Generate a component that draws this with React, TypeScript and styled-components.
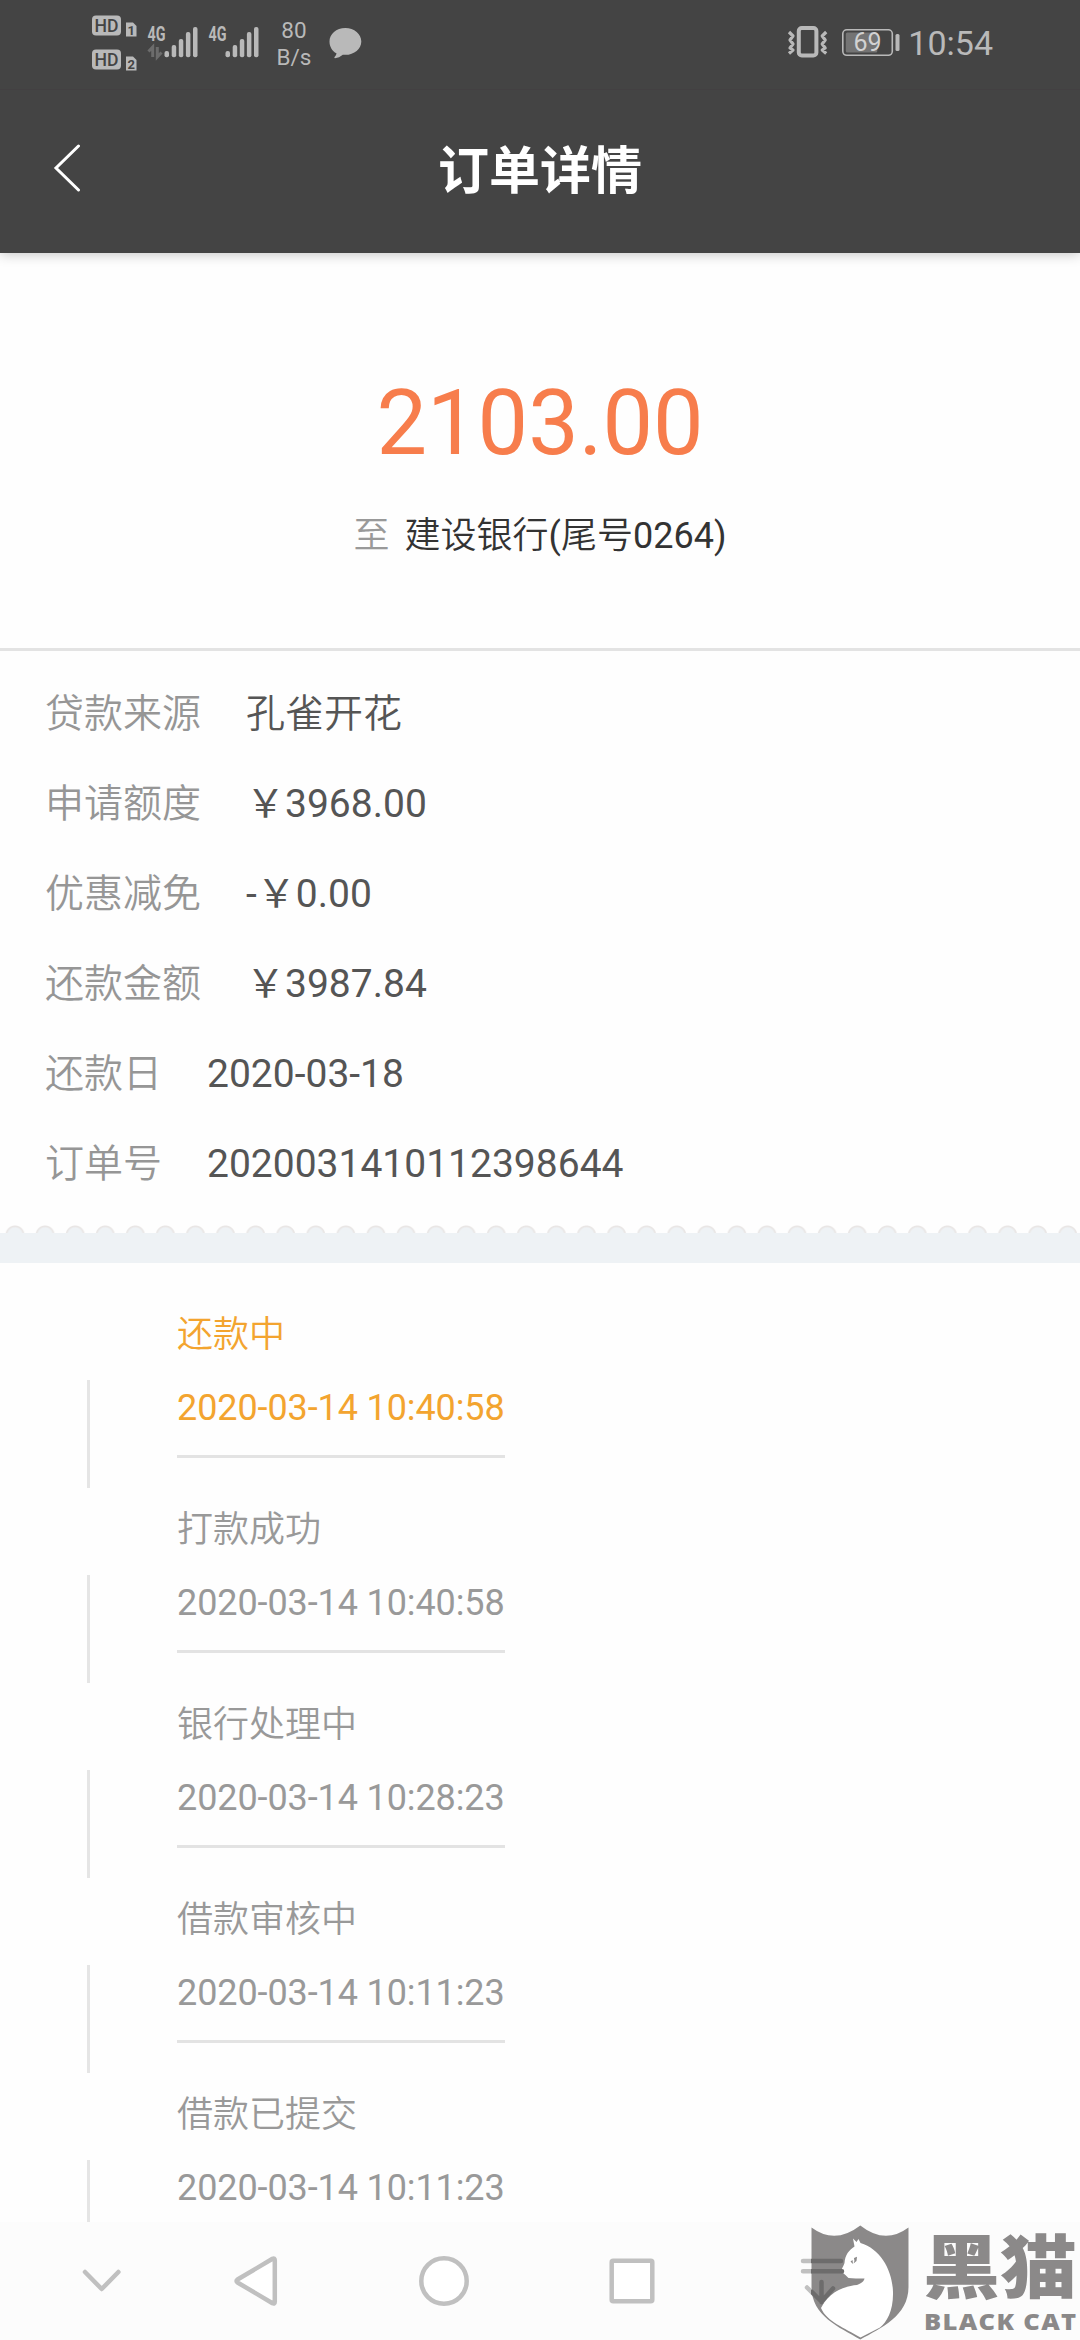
import React from 'react';
import styled, { createGlobalStyle } from 'styled-components';

const INK = '#b9b9b9';
const FONT = "Roboto, 'Noto Sans CJK SC', sans-serif";

const GlobalStyle = createGlobalStyle`
  *, *::before, *::after { box-sizing: border-box; }
  html, body { margin: 0; padding: 0; background: #fefefe; }
`;

const Screen = styled.div`
  position: relative;
  display: flex;
  flex-direction: column;
  width: 1080px;
  height: 2340px;
  overflow: hidden;
  background: #fefefe;
  font-family: ${FONT};
`;

/* ---------- status bar ---------- */

const StatusBar = styled.div`
  display: flex;
  flex: none;
  justify-content: space-between;
  height: 90px;
  padding: 0 87px 0 92px;
  background: #444;
  border-bottom: 1px solid #434042;
  color: ${INK};
  z-index: 2;
`;

const StatusGroup = styled.div`
  display: flex;
  align-items: flex-start;
`;

const StatusIcon = styled.svg<{ $left?: number }>`
  display: block;
  flex: none;
  margin-left: ${(p) => p.$left ?? 0}px;
  overflow: visible;
`;

const NetSpeed = styled.div`
  display: flex;
  flex-direction: column;
  align-items: center;
  width: 36px;
  margin: 17px 0 0 16px;
  font-size: 22.5px;
  line-height: 27px;
`;

const Clock = styled.div`
  margin: 23px 0 0 7px;
  font-size: 34px;
  line-height: 40px;
`;

const HdIcon = () => (
  <StatusIcon width="46" height="89" viewBox="92 0 46 89">
    {[0, 34].map((dy, i) => (
      <g key={dy} transform={`translate(0 ${dy})`}>
        <rect x="92" y="15.5" width="29" height="20" rx="4" fill={INK} />
        <text x="106.5" y="32" fontSize="18.5" fontWeight="500" textAnchor="middle" fill="#444"
          textLength="24" lengthAdjust="spacingAndGlyphs">HD</text>
        <path d="M126 22.5h7l3.5 3.5v10.500h-10.500z" fill={INK} />
        <text x="131.2" y="34.500" fontSize="13" fontWeight="700" textAnchor="middle" fill="#444">{i + 1}</text>
      </g>
    ))}
  </StatusIcon>
);

const BARS = [
  [164.500, 51],
  [171.700, 45],
  [178.800, 39],
  [185.900, 32],
  [193, 27],
];

const SignalIcon = ({ data }: { data?: boolean }) => (
  <StatusIcon width="61" height="89" viewBox="138 0 61 89">
    <text x="147.500" y="41" fontSize="20" fontWeight="700" fill={INK}
      textLength="18" lengthAdjust="spacingAndGlyphs">4G</text>
    {data && (
      <path d="M148.500 51.500l4.200-4.500v10M157.300 47v10l4.200-4.500" fill="none" stroke="#6c6c6c" strokeWidth="3" />
    )}
    {BARS.map(([x, y]) => (
      <rect key={x} x={x} y={y} width="4.500" height={57.3 - y} rx="2" fill={INK} />
    ))}
  </StatusIcon>
);

const BubbleIcon = () => (
  <StatusIcon $left={16} width="34" height="89" viewBox="328 0 34 89">
    <path fill={INK} d="M345.300 28c9 0 16 6 16 13.400s-7 13.400-16 13.400c-.9 0-1.700 0-2.500-.1-2.400 2-5 3.200-7.800 3.500-.7 0-.9-.7-.4-1.200 1.100-1.100 1.700-2.300 1.900-3.700-4.400-2.400-7-6.800-7-11.900C329.500 34 336.300 28 345.300 28z" />
  </StatusIcon>
);

const VibrateIcon = () => (
  <StatusIcon width="42" height="89" viewBox="786 0 42 89">
    <rect x="797.800" y="28" width="17.600" height="27.500" rx="3" fill="none" stroke={INK} strokeWidth="4" />
    <path d="M788 32l4 4-3 4 3 4-3 4 3 2-4 3.500M825.200 32l-4 4 3 4-3 4 3 4-3 2 4 3.500" fill="none"
      stroke={INK} strokeWidth="3.200" strokeLinejoin="round" />
  </StatusIcon>
);

const BatteryIcon = () => (
  <StatusIcon $left={13} width="59" height="89" viewBox="841 0 59 89">
    <rect x="841.800" y="29.800" width="49.500" height="25.500" rx="4" fill="none" stroke={INK} strokeWidth="1.600" />
    <rect x="844.800" y="32.500" width="31.500" height="20" rx="1.500" fill="#747474" />
    <rect x="894.500" y="34" width="4" height="17" rx="1.500" fill={INK} />
    <text x="866.500" y="51" fontSize="25" textAnchor="middle" fill="#d2d2d2">69</text>
  </StatusIcon>
);

/* ---------- title bar ---------- */

const TitleBar = styled.header`
  display: grid;
  grid-template-columns: 140px 1fr 140px;
  align-items: center;
  flex: none;
  height: 163px;
  background: #444;
  color: #fff;
  box-shadow: 0 1px 12px rgba(0, 0, 0, 0.24);
  z-index: 1;
`;

const BackIcon = styled.svg`
  display: block;
  margin: 0 0 7px 53px;
`;

const Title = styled.h1`
  margin: 0;
  font-size: 51px;
  font-weight: 700;
  line-height: 60px;
  text-align: center;
`;

/* ---------- amount ---------- */

const Summary = styled.section`
  display: flex;
  flex-direction: column;
  align-items: center;
  flex: none;
  height: 398px;
  padding-top: 118px;
  border-bottom: 3px solid #e3e3e3;
`;

const Amount = styled.div`
  color: #f77d4c;
  font-size: 90px;
  line-height: 106px;
`;

const Payee = styled.div`
  display: flex;
  gap: 15px;
  margin-top: 33px;
  color: #333;
  font-size: 36px;
  line-height: 52px;
`;

const Han = styled.span<{ $muted?: boolean }>`
  color: ${(p) => (p.$muted ? '#999' : 'inherit')};
  font-weight: 350;
`;

/* ---------- order details ---------- */

const Details = styled.dl`
  display: flex;
  flex-direction: column;
  flex: none;
  height: 574px;
  margin: 0;
  padding: 18px 45px 0;
`;

const DetailRow = styled.div`
  display: flex;
  align-items: center;
  gap: 45px;
  height: 90px;
  font-size: 39px;
  line-height: 58px;
`;

const Label = styled.dt`
  color: #969696;
  font-weight: 350;
`;

const Value = styled.dd<{ $han: boolean }>`
  margin: 0;
  color: #555;
  font-weight: ${(p) => (p.$han ? 350 : 400)};
`;

const Scallops = styled.div`
  flex: none;
  height: 8px;
  background: radial-gradient(circle at 15px 10px, #eef2f5 7px, #e9e6e5 8.500px, #e9e6e5 9px, transparent 10px) 0 0 / 30.080px 8px repeat-x;
`;

const Band = styled.div`
  flex: none;
  height: 30px;
  background: #eef2f5;
`;

/* ---------- timeline ---------- */

const Timeline = styled.ol`
  flex: 1;
  min-height: 0;
  margin: 0;
  padding: 36px 0 0;
  overflow: hidden;
  list-style: none;
`;

const Step = styled.li<{ $active?: boolean }>`
  display: flex;
  height: 195px;
  padding-left: 87px;
  color: ${(p) => (p.$active ? '#f3a42f' : '#999')};
`;

const Track = styled.div`
  flex: none;
  width: 3px;
  height: 108px;
  margin: 81px 87px 0 0;
  background: #e5e5e5;
`;

const StepBody = styled.div`
  height: 159px;
  border-bottom: 3px solid #e3e3e3;
  font-size: 36px;
`;

const StepName = styled.div`
  height: 72px;
  line-height: 73px;
  font-weight: 350;
`;

const StepTime = styled.div`
  line-height: 74px;
  letter-spacing: -0.1px;
`;

/* ---------- navigation bar ---------- */

const NavBar = styled.nav`
  display: flex;
  align-items: center;
  flex: none;
  height: 118px;
  padding: 0 0 1px 81px;
  background: #fcfcfc;
`;

const NavIcon = styled.svg<{ $gap: number }>`
  display: block;
  flex: none;
  margin-right: ${(p) => p.$gap}px;
  fill: none;
  stroke: #c0c0c0;
  stroke-width: 4.500px;
  stroke-linecap: round;
  stroke-linejoin: round;
`;

/* ---------- watermark ---------- */

const Watermark = styled.div`
  position: absolute;
  right: 2px;
  bottom: 0;
  display: flex;
  gap: 15px;
  height: 116px;
  color: #8b8989;
`;

const Shield = styled.svg`
  display: block;
  flex: none;
`;

const Brand = styled.div`
  display: flex;
  flex-direction: column;
  width: 154px;
  padding-top: 1px;
`;

const BrandName = styled.div`
  height: 82px;
  margin-left: -1px;
  font-family: 'Noto Sans CJK SC', sans-serif;
  font-size: 77px;
  font-weight: 900;
  line-height: 76px;
  white-space: nowrap;
  transform: scaleY(0.9);
`;

const BrandLatin = styled.div`
  font-family: 'Open Sans', sans-serif;
  font-size: 23px;
  font-weight: 800;
  line-height: 28px;
  letter-spacing: 1.200px;
  white-space: nowrap;
  transform: scaleX(1.11);
  transform-origin: left center;
`;

const details = [
  ['贷款来源', '孔雀开花'],
  ['申请额度', '￥3968.00'],
  ['优惠减免', '-￥0.00'],
  ['还款金额', '￥3987.84'],
  ['还款日', '2020-03-18'],
  ['订单号', '2020031410112398644'],
];

const steps = [
  ['还款中', '2020-03-14 10:40:58'],
  ['打款成功', '2020-03-14 10:40:58'],
  ['银行处理中', '2020-03-14 10:28:23'],
  ['借款审核中', '2020-03-14 10:11:23'],
  ['借款已提交', '2020-03-14 10:11:23'],
];

export default function App() {
  return (
    <>
      <GlobalStyle />
      <Screen>
        <StatusBar>
          <StatusGroup>
            <HdIcon />
            <SignalIcon data />
            <SignalIcon />
            <NetSpeed>
              <span>80</span>
              <span>B/s</span>
            </NetSpeed>
            <BubbleIcon />
          </StatusGroup>
          <StatusGroup>
            <VibrateIcon />
            <BatteryIcon />
            <Clock>10:54</Clock>
          </StatusGroup>
        </StatusBar>

        <TitleBar>
          <BackIcon width="30" height="48" viewBox="0 0 30 48">
            <path d="M25.500 2L3 24l22.500 22" fill="none" stroke="#fff" strokeWidth="3" strokeLinecap="round" />
          </BackIcon>
          <Title>订单详情</Title>
        </TitleBar>

        <Summary>
          <Amount>2103.00</Amount>
          <Payee>
            <Han $muted>至</Han>
            <span>
              <Han>建设银行</Han>(<Han>尾号</Han>0264)
            </span>
          </Payee>
        </Summary>

        <Details>
          {details.map(([label, value], i) => (
            <DetailRow key={label}>
              <Label>{label}</Label>
              <Value $han={i === 0}>{value}</Value>
            </DetailRow>
          ))}
        </Details>
        <Scallops />
        <Band />

        <Timeline>
          {steps.map(([name, time], i) => (
            <Step key={name} $active={i === 0}>
              <Track />
              <StepBody>
                <StepName>{name}</StepName>
                <StepTime>{time}</StepTime>
              </StepBody>
            </Step>
          ))}
        </Timeline>

        <NavBar>
          <NavIcon $gap={111} width="41" height="54" viewBox="81 2254 41 54">
            <path d="M85 2272l16.700 17 16.700-17" />
          </NavIcon>
          <NavIcon $gap={138} width="46" height="54" viewBox="233 2254 46 54">
            <path fill="#fff" d="M272.500 2258.800L237.500 2279.500q-2 1.500 0 3L272.500 2303.200q2.300 1 2.300-1.500V2260.300q0-2.500-2.300-1.500z" />
          </NavIcon>
          <NavIcon $gap={136} width="54" height="54" viewBox="417 2254 54 54">
            <circle fill="#fff" cx="444" cy="2281" r="22.700" />
          </NavIcon>
          <NavIcon $gap={143} width="50" height="54" viewBox="607 2254 50 54">
            <rect fill="#fff" x="611.700" y="2260.700" width="40.600" height="40.600" rx="1.500" />
          </NavIcon>
          <NavIcon $gap={0} width="44" height="54" viewBox="800 2254 44 54">
            <path d="M803 2261h37M803 2271.300h37M821 2282v20M807 2287.500l14 14 14-14" />
          </NavIcon>
        </NavBar>

        <Watermark>
          <Shield width="98" height="116" viewBox="0 0 98 116">
            <path
              fill="#8b8989"
              d="M.5 3.500Q24 21 49.300 1.500 74 21 97.500 3.500V63C97.500 92 70 104 49.300 115.500 28 103 .5 92 .5 63z"
            />
            <path
              fill="#fff"
              d="M42 14.500L45.500 18 47.500 15 49.500 19C70 25 81.500 47 82 68 82.500 86 76 98 69 103.500L49.500 113.500C33 103.500 16 98 10 84 19 66 36 62 46 61 51 59 53 57 53.500 54.500 47 54.500 42 54.500 37.500 54 34 50 31 49 30.500 46 31.500 43 33 41 33.500 39 34 31 38 26 43.500 22.500z"
            />
            <path fill="#8b8989" d="M39.500 37.500l2-1.500.5 4zM43 34l3-1.200-.5 4.200-3 2.500q1.500-3 .5-5.500z" />
            <g fill="none" stroke="#6d6c6c" strokeWidth="4.500" strokeLinecap="round">
              <path d="M1 37h29M1 47.300h30" />
              <path d="M10.500 58v20M1 68l9.500 9.500L22 64.500" />
            </g>
          </Shield>
          <Brand>
            <BrandName>黑猫</BrandName>
            <BrandLatin>BLACK CAT</BrandLatin>
          </Brand>
        </Watermark>
      </Screen>
    </>
  );
}
